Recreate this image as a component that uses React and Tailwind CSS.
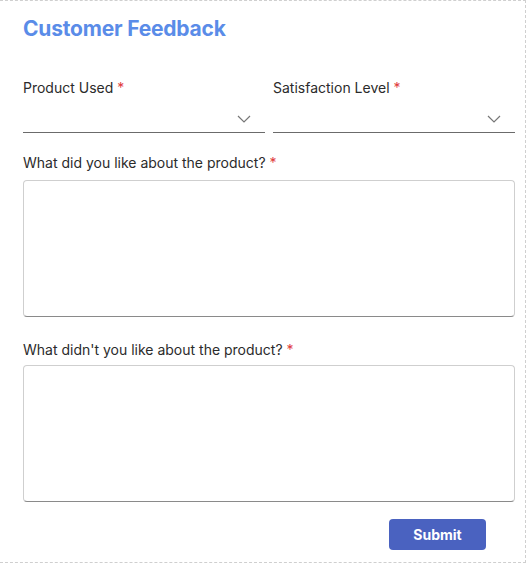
import React from 'react';

function Req() {
  return <span className="text-[#e03b3b] ml-1">*</span>;
}

function Select({ label }) {
  return (
    <div className="flex-1 flex flex-col">
      <label className="text-[14px] text-[#2b2b2b] leading-[20px]">
        {label}
        <Req />
      </label>
      <div className="h-[27px] mt-[8px] border-b border-[#6b6b6b] flex items-center justify-end pr-[14px]">
        <svg width="14" height="8" viewBox="0 0 14 8" fill="none">
          <path d="M1 1l6 6 6-6" stroke="#777" strokeWidth="1.2" />
        </svg>
      </div>
    </div>
  );
}

function Area({ label, gap }) {
  return (
    <div className="flex flex-col">
      <label className="text-[14px] text-[#2b2b2b] leading-[20px]">
        {label}
        <Req />
      </label>
      <textarea className={`${gap} h-[137px] w-full resize-none rounded-[4px] border border-[#cfcfcf] border-b-[#8a8a8a] bg-white`} />
    </div>
  );
}

export default function App() {
  return (
    <div className="w-[526px] h-[563px] bg-white border-t border-r border-b border-dashed border-[#cfcfcf] pl-[23px] pr-[10px] pt-[14px] font-['Inter',sans-serif]">
      <h1 className="text-[21px] font-bold text-[#5a8ce8] leading-[28px] tracking-[-0.2px]">Customer Feedback</h1>
      <div className="flex gap-[8px] mt-[35px]">
        <Select label="Product Used" />
        <Select label="Satisfaction Level" />
      </div>
      <div className="mt-[20px]">
        <Area label="What did you like about the product?" gap="mt-[7px]" />
      </div>
      <div className="mt-[23px]">
        <Area label="What didn't you like about the product?" gap="mt-[5px]" />
      </div>
      <div className="flex justify-end pr-[29px] mt-[17px]">
        <button className="w-[97px] h-[31px] rounded-[4px] bg-[#4a62c0] text-white text-[14px] font-bold">Submit</button>
      </div>
    </div>
  );
}
